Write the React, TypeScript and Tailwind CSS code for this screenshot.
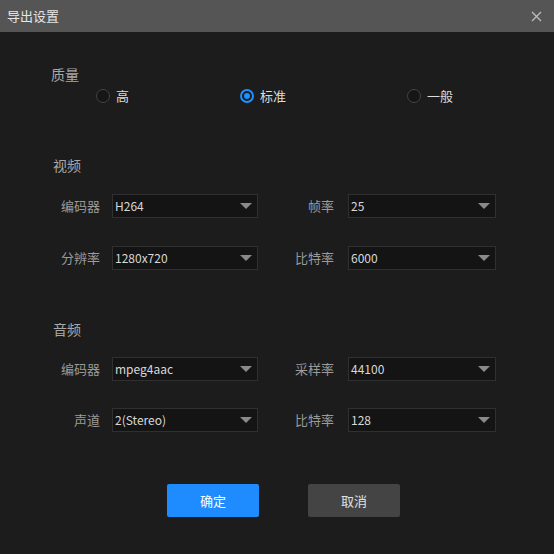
import React from "react";

const font = { fontFamily: '"Noto Sans CJK SC", "Noto Sans", sans-serif' };

const Radio = ({ label, checked, width }: { label: string; checked?: boolean; width?: string }) => (
  <div className={`flex items-center gap-[6px] ${width ?? ""}`}>
    {checked ? (
      <span className="w-[14px] h-[14px] rounded-full border-2 border-[#1e8fff] flex items-center justify-center">
        <span className="w-[6px] h-[6px] rounded-full bg-[#1e8fff]" />
      </span>
    ) : (
      <span className="w-[14px] h-[14px] rounded-full border border-[#444] bg-[#161616]" />
    )}
    <span className="text-[13px] text-[#dcdcdc] leading-[20px]">{label}</span>
  </div>
);

const Select = ({ value, width }: { value: string; width: string }) => (
  <div className={`${width} h-[24px] bg-[#141414] border border-[#303030] flex items-center justify-between pl-[2px] pr-[5px]`}>
    <span className="text-[12px] text-[#d8d8d8]">{value}</span>
    <svg width="12" height="6" viewBox="0 0 12 6">
      <polygon points="0,0 12,0 6,6" fill="#8a8a8a" />
    </svg>
  </div>
);

const Row = ({ l1, v1, l2, v2 }: { l1: string; v1: string; l2: string; v2: string }) => (
  <div className="flex items-center">
    <span className="w-[47px] text-right text-[13px] text-[#9a9a9a]">{l1}</span>
    <div className="ml-[12px]">
      <Select value={v1} width="w-[146px]" />
    </div>
    <span className="w-[76px] text-right text-[13px] text-[#9a9a9a]">{l2}</span>
    <div className="ml-[14px]">
      <Select value={v2} width="w-[148px]" />
    </div>
  </div>
);

const App = () => {
  return (
    <div className="w-[554px] h-[554px] bg-[#1c1c1c] flex flex-col overflow-hidden" style={font}>
      <div className="h-[32px] bg-[#555555] flex items-center justify-between pl-[7px] pr-[12px] shrink-0">
        <span className="text-[13px] text-[#e6e6e6]">导出设置</span>
        <svg width="11" height="11" viewBox="0 0 11 11">
          <path d="M1 1 L10 10 M10 1 L1 10" stroke="#bdbdbd" strokeWidth="1.3" />
        </svg>
      </div>
      <div className="pl-[53px] flex flex-col">
        <div className="mt-[32px] text-[14px] leading-[20px] text-[#a8a8a8] -ml-[2px]">质量</div>
        <div className="mt-[2px] flex items-center pl-[43px]">
          <Radio label="高" width="w-[144px]" />
          <Radio label="标准" checked width="w-[167px]" />
          <Radio label="一般" />
        </div>

        <div className="mt-[49px] text-[14px] leading-[20px] text-[#a8a8a8]">视频</div>
        <div className="mt-[19px] flex flex-col gap-[28px]">
          <Row l1="编码器" v1="H264" l2="帧率" v2="25" />
          <Row l1="分辨率" v1="1280x720" l2="比特率" v2="6000" />
        </div>

        <div className="mt-[49px] text-[14px] leading-[20px] text-[#a8a8a8]">音频</div>
        <div className="mt-[18px] flex flex-col gap-[27px]">
          <Row l1="编码器" v1="mpeg4aac" l2="采样率" v2="44100" />
          <Row l1="声道" v1="2(Stereo)" l2="比特率" v2="128" />
        </div>
      </div>
      <div className="mt-[52px] flex pl-[167px] gap-[49px]">
        <button className="w-[92px] h-[33px] rounded-[2px] bg-[#1e8cff] text-[13px] text-white">确定</button>
        <button className="w-[92px] h-[33px] rounded-[2px] bg-[#444444] text-[13px] text-[#e0e0e0]">取消</button>
      </div>
    </div>
  );
};

export default App;
